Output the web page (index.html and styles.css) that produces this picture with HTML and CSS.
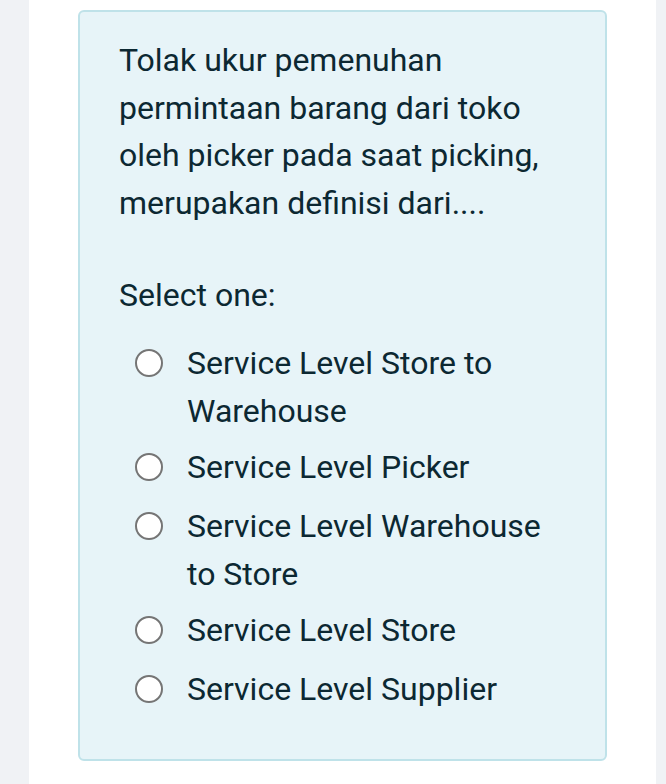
FILE: index.html
```html
<!DOCTYPE html>
<html lang="id">
<head>
<meta charset="utf-8">
<title>Question</title>
<link rel="stylesheet" href="styles.css">
</head>
<body>
<div class="page">
  <main class="sheet">
    <section class="card">
      <p class="qtext">Tolak ukur pemenuhan permintaan barang dari toko oleh picker pada saat picking, merupakan definisi dari....</p>
      <p class="prompt">Select one:</p>
      <div class="answers">
        <label class="option"><span class="radio"></span><span class="label">Service Level Store to Warehouse</span></label>
        <label class="option"><span class="radio"></span><span class="label">Service Level Picker</span></label>
        <label class="option"><span class="radio"></span><span class="label">Service Level Warehouse to Store</span></label>
        <label class="option"><span class="radio"></span><span class="label">Service Level Store</span></label>
        <label class="option"><span class="radio"></span><span class="label">Service Level Supplier</span></label>
      </div>
    </section>
  </main>
</div>
</body>
</html>
```
FILE: styles.css
```css
html, body {
  margin: 0;
  padding: 0;
}
body {
  background: #f0f2f5;
  font-family: Roboto, "Noto Sans", sans-serif;
  color: #0c2832;
}
.page {
  display: flex;
  min-height: 784px;
}
.sheet {
  margin-left: 29px;
  width: 627px;
  background: #ffffff;
  padding: 10px 49px 24px;
  box-sizing: border-box;
}
.card {
  background: #e7f4f8;
  border: 2px solid #bfe2e9;
  border-radius: 6px;
  padding: 25px 39px 43px;
  font-size: 32px;
  line-height: 47.5px;
}
.qtext {
  margin: 0;
}
.prompt {
  margin: 44px 0 0;
  line-height: 48px;
}
.answers {
  margin-top: 20px;
  display: flex;
  flex-direction: column;
  gap: 8px;
}
.option {
  display: flex;
  align-items: flex-start;
  line-height: 48px;
  padding-left: 16px;
}
.radio {
  flex: none;
  width: 24px;
  height: 24px;
  border: 2px solid #757575;
  border-radius: 50%;
  background: #ffffff;
  margin: 10px 24px 13px 0;
}
.label {
  flex: 1;
}
```
